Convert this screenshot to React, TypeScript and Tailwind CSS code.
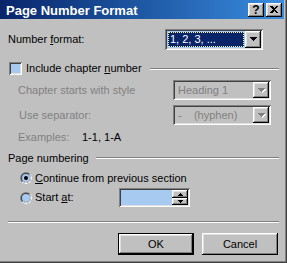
import type { ReactNode } from "react";

const raised =
  "shadow-[inset_-1px_-1px_#000,inset_1px_1px_#fff,inset_-2px_-2px_#808080,inset_2px_2px_#dfdfdf]";
const sunken =
  "shadow-[inset_1px_1px_#808080,inset_-1px_-1px_#fff,inset_2px_2px_#404040,inset_-2px_-2px_#dfdfdf]";

function Arrow({ disabled, up }: { disabled?: boolean; up?: boolean }) {
  const d = up
    ? "M3 0h1v1H3zM2 1h3v1H2zM1 2h5v1H1zM0 3h7v1H0z"
    : "M0 0h7v1H0zM1 1h5v1H1zM2 2h3v1H2zM3 3h1v1H3z";
  return (
    <svg width="8" height="5" viewBox="0 0 8 5" shapeRendering="crispEdges" className="block">
      {disabled && <path d={d} fill="#fff" transform="translate(1 1)" />}
      <path d={d} fill={disabled ? "#808080" : "#000"} />
    </svg>
  );
}

function DropButton({ disabled }: { disabled?: boolean }) {
  return (
    <div className={`flex h-full w-[16px] items-center justify-center bg-[#c0c0c0] pl-[1px] ${raised}`}>
      <Arrow disabled={disabled} />
    </div>
  );
}

function Combo({ value, disabled, selected }: { value: string; disabled?: boolean; selected?: boolean }) {
  return (
    <div
      className={`flex h-full w-[98px] p-[2px] ${sunken} ${disabled ? "bg-[#c0c0c0]" : "bg-[#a6caf0]"}`}
    >
      <div className="flex flex-1 items-center p-[1px] pr-[1px]">
        {selected ? (
          <div className="flex h-full w-full items-center bg-[#0a246a] pl-[2px] text-white outline-1 outline-dotted outline-[#f4f0a0] -outline-offset-1">
            {value}
          </div>
        ) : (
          <span className={`pl-[2px] whitespace-pre ${disabled ? "text-[#808080]" : ""}`}>{value}</span>
        )}
      </div>
      <DropButton disabled={disabled} />
    </div>
  );
}

function Etched({ className = "" }: { className?: string }) {
  return <div className={`h-[2px] border-t border-b border-t-[#808080] border-b-white ${className}`} />;
}

function Radio({ checked }: { checked?: boolean }) {
  return (
    <div className="relative h-[12px] w-[12px] rounded-full bg-[#808080]">
      <div className="absolute inset-0 rounded-full border border-b-white border-r-white border-t-transparent border-l-transparent" />
      <div className="absolute inset-[1px] rounded-full bg-[#404040]">
        <div className="absolute inset-0 rounded-full border border-b-[#dfdfdf] border-r-[#dfdfdf] border-t-transparent border-l-transparent" />
        <div className="absolute inset-[1px] flex items-center justify-center rounded-full bg-[#a6caf0]">
          {checked && <div className="h-[4px] w-[4px] rounded-full bg-black" />}
        </div>
      </div>
    </div>
  );
}

function Button({ children, isDefault }: { children: ReactNode; isDefault?: boolean }) {
  return (
    <div className={`h-[22px] w-[76px] ${isDefault ? "border border-black" : ""}`}>
      <div className={`flex h-full w-full items-center justify-center bg-[#c0c0c0] ${raised}`}>{children}</div>
    </div>
  );
}

function TitleButton({ children }: { children: ReactNode }) {
  return (
    <div
      className={`flex h-[14px] w-[16px] items-center justify-center bg-[#c0c0c0] text-[12px] leading-none font-bold text-black ${raised}`}
    >
      {children}
    </div>
  );
}

export default function App() {
  return (
    <div className="h-[263px] w-[287px] overflow-hidden bg-[#c0c0c0] text-[11px] leading-none text-black font-['Liberation_Sans',Arial,sans-serif] shadow-[inset_-1px_-1px_#404040,inset_-2px_-2px_#808080]">
      {/* title bar */}
      <div className="flex h-[19px] w-[284px] items-center gap-[2px] bg-gradient-to-r from-[#0a246a] to-[#3a8ee0] pr-[2px] pl-[6px]">
        <span className="flex-1 pt-[1px] text-[13px] font-bold text-white">Page Number Format</span>
        <TitleButton>?</TitleButton>
        <TitleButton>
          <svg width="8" height="7" viewBox="0 0 8 7" shapeRendering="crispEdges">
            <path d="M0 0h2l2 2 2-2h2L5 3.5 8 7H6L4 5 2 7H0l3-3.5z" fill="#000" />
          </svg>
        </TitleButton>
      </div>

      <div className="flex flex-col">
        <div className="mt-[10px] flex h-[21px] items-center">
          <span className="w-[165px] pl-[8px]">
            Number <u>f</u>ormat:
          </span>
          <Combo value="1, 2, 3, ..." selected />
        </div>

        <div className="mt-[12px] flex h-[13px] items-center">
          <div className={`ml-[9px] h-[13px] w-[13px] p-[2px] bg-[#a6caf0] ${sunken}`} />
          <span className="ml-[4px]">
            Include chapter <u>n</u>umber
          </span>
          <Etched className="mr-[8px] ml-[8px] flex-1" />
        </div>

        <div className="mt-[5px] flex h-[20px] items-center text-[#808080]">
          <span className="w-[173px] pl-[18px]">Chapter starts with style</span>
          <Combo value="Heading 1" disabled />
        </div>

        <div className="mt-[5px] flex h-[20px] items-center text-[#808080]">
          <span className="w-[173px] pl-[19px]">Use separator:</span>
          <Combo value="-    (hyphen)" disabled />
        </div>

        <div className="mt-[5px] flex h-[14px] items-center">
          <span className="w-[82px] pl-[18px] text-[#808080]">Examples:</span>
          <span>1-1, 1-A</span>
        </div>

        <div className="mt-[7px] flex h-[14px] items-center">
          <span className="pl-[8px]">Page numbering</span>
          <Etched className="mr-[8px] ml-[7px] flex-1" />
        </div>

        <div className="mt-[6px] flex h-[14px] items-center">
          <div className="ml-[20px]">
            <Radio checked />
          </div>
          <span className="ml-[3px]">
            <u>C</u>ontinue from previous section
          </span>
        </div>

        <div className="mt-[3px] flex h-[19px] items-center">
          <div className="ml-[20px]">
            <Radio />
          </div>
          <span className="ml-[3px] w-[84px]">
            Start <u>a</u>t:
          </span>
          <div className={`flex h-[19px] w-[71px] p-[2px] bg-[#a6caf0] ${sunken}`}>
            <div className="flex-1" />
            <div className="flex w-[16px] flex-col">
              <div className={`flex h-[8px] items-center justify-center bg-[#c0c0c0] ${raised}`}>
                <svg width="5" height="3" viewBox="0 0 5 3" shapeRendering="crispEdges">
                  <path d="M2 0h1v1H2zM1 1h3v1H1zM0 2h5v1H0z" fill="#000" />
                </svg>
              </div>
              <div className={`flex h-[7px] items-center justify-center bg-[#c0c0c0] ${raised}`}>
                <svg width="5" height="3" viewBox="0 0 5 3" shapeRendering="crispEdges">
                  <path d="M0 0h5v1H0zM1 1h3v1H1zM2 2h1v1H2z" fill="#000" />
                </svg>
              </div>
            </div>
          </div>
        </div>

        <Etched className="mt-[14px] mr-[8px] ml-[8px]" />

        <div className="mt-[10px] flex gap-[8px] pl-[118px]">
          <Button isDefault>OK</Button>
          <Button>Cancel</Button>
        </div>
      </div>
    </div>
  );
}
